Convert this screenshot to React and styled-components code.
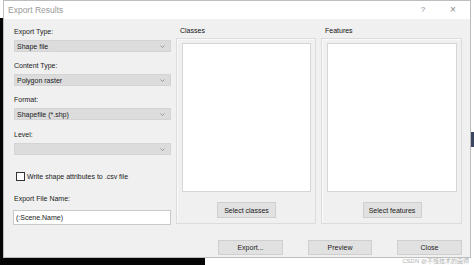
import React from 'react';
import styled, { createGlobalStyle } from 'styled-components';

const GlobalStyle = createGlobalStyle`
	html, body {
		margin: 0;
		padding: 0;
		background: #fff;
	}
	body {
		font-family: 'Liberation Sans', Arial, sans-serif;
		color: #1a1a1a;
	}
`;

const Page = styled.div`
	display: flex;
	width: 474px;
	height: 265px;
	overflow: hidden;
	background: #fff;
`;

const LeftEdge = styled.div`
	width: 3px;
	margin-top: 18px;
	background: #050505;
`;

const RightEdge = styled.div`
	width: 3px;
	padding-top: 132px;
	box-sizing: border-box;
`;

const EdgeMark = styled.div`
	height: 15px;
	background: #3b4660;
`;

const Stage = styled.div`
	width: 468px;
	display: flex;
	flex-direction: column;
`;

const Dialog = styled.div`
	height: 258px;
	box-sizing: border-box;
	border: 1px solid #bdbdbd;
	display: flex;
	flex-direction: column;
	background: #f0f0f0;
`;

const TitleBar = styled.div`
	height: 18px;
	background: #fff;
	display: flex;
	align-items: center;
	padding-left: 4px;
	padding-right: 2px;
`;

const Title = styled.div`
	flex: 1;
	font-size: 8.5px;
	color: #9a9a9a;
`;

const CaptionButton = styled.div`
	width: 30px;
	text-align: center;
	font-size: ${p => p.size || 8}px;
	color: #8a8a8a;
	line-height: 18px;
`;

const Body = styled.div`
	flex: 1;
	display: flex;
	flex-direction: column;
	padding: 8px 8px 0 9px;
`;

const Main = styled.div`
	display: grid;
	grid-template-columns: 158px 140px 141px;
	column-gap: 5px;
	align-items: start;
`;

const LeftColumn = styled.div`
	display: flex;
	flex-direction: column;
`;

const Label = styled.div`
	font-size: 7px;
	line-height: 10px;
	height: 10px;
	padding-left: 1px;
	margin-bottom: ${p => p.gap || 3}px;
	white-space: nowrap;
`;

const Field = styled.div`
	margin-bottom: ${p => p.spacing || 9}px;
`;

const Select = styled.div`
	height: 12px;
	margin-left: 1px;
	background: #dcdcdc;
	border: 1px solid #d4d4d4;
	box-sizing: border-box;
	display: flex;
	align-items: center;
	justify-content: space-between;
	padding: 0 5px 0 2px;
	font-size: 7px;
`;

const CheckRow = styled.label`
	display: flex;
	align-items: center;
	gap: 2px;
	height: 10px;
	margin-top: 7px;
	padding-left: 3px;
	font-size: 7px;
`;

const CheckBox = styled.span`
	width: 9px;
	height: 9px;
	box-sizing: border-box;
	border: 1px solid #333;
	background: #fff;
`;

const FileField = styled.div`
	margin-top: 13px;
`;

const TextInput = styled.div`
	height: 15px;
	box-sizing: border-box;
	background: #fff;
	border: 1px solid #c9c9c9;
	display: flex;
	align-items: center;
	padding-left: 2px;
	font-size: 7px;
`;

const GroupColumn = styled.div`
	display: flex;
	flex-direction: column;
`;

const GroupTitle = styled.div`
	font-size: 7px;
	line-height: 10px;
	height: 10px;
	padding-left: 4px;
	margin-top: -1px;
	margin-bottom: 2px;
	color: #111;
`;

const GroupBox = styled.div`
	height: 186px;
	box-sizing: border-box;
	border: 1px solid #dcdcdc;
	box-shadow: inset 1px 1px 0 #fafafa;
	padding: 4px 4px 0 5px;
	display: flex;
	flex-direction: column;
	align-items: center;
`;

const ListBox = styled.div`
	align-self: stretch;
	height: 149px;
	box-sizing: border-box;
	background: #fff;
	border: 1px solid #d6d6d6;
`;

const Button = styled.div`
	width: ${p => p.width || 65}px;
	height: ${p => p.height || 15}px;
	box-sizing: border-box;
	background: #e1e1e1;
	border: 1px solid #cfcfcf;
	display: flex;
	align-items: center;
	justify-content: center;
	font-size: 7px;
	margin-top: ${p => p.top || 0}px;
`;

const ButtonRow = styled.div`
	display: flex;
	justify-content: flex-end;
	gap: 25px;
	margin-top: 15px;
`;

const Footer = styled.div`
	height: 7px;
	display: flex;
	align-items: center;
`;

const FooterShadow = styled.div`
	width: 202px;
	height: 100%;
	background: #050505;
`;

const Watermark = styled.div`
	margin-left: auto;
	margin-right: 2px;
	font-family: 'Liberation Sans', 'Noto Sans CJK SC', sans-serif;
	font-size: 6px;
	line-height: 7px;
	color: #b0b0b0;
	white-space: nowrap;
`;

const Chevron = () => (
	<svg width="5" height="3" viewBox="0 0 5 3">
		<path d="M0.5 0.5 L2.5 2.5 L4.5 0.5" fill="none" stroke="#8a8a8a" strokeWidth="0.8" />
	</svg>
);

const SelectField = ({ label, value, spacing }) => (
	<Field spacing={spacing}>
		<Label>{label}</Label>
		<Select>
			<span>{value}</span>
			<Chevron />
		</Select>
	</Field>
);

const Group = ({ title, action, buttonWidth }) => (
	<GroupColumn>
		<GroupTitle>{title}</GroupTitle>
		<GroupBox>
			<ListBox />
			<Button width={buttonWidth} height={16} top={10}>
				{action}
			</Button>
		</GroupBox>
	</GroupColumn>
);

const App = () => (
	<>
		<GlobalStyle />
		<Page>
			<LeftEdge />
			<Stage>
				<Dialog>
					<TitleBar>
						<Title>Export Results</Title>
						<CaptionButton>?</CaptionButton>
						<CaptionButton size={10}>×</CaptionButton>
					</TitleBar>
					<Body>
						<Main>
							<LeftColumn>
								<SelectField label='Export Type:' value='Shape file' />
								<SelectField label='Content Type:' value='Polygon raster' />
								<SelectField label='Format:' value='Shapefile (*.shp)' spacing={10} />
								<SelectField label='Level:' value='' spacing={0} />
								<CheckRow>
									<CheckBox />
									Write shape attributes to .csv file
								</CheckRow>
								<FileField>
									<Label gap={6}>Export File Name:</Label>
									<TextInput>(:Scene.Name)</TextInput>
								</FileField>
							</LeftColumn>
							<Group title='Classes' action='Select classes' buttonWidth={59} />
							<Group title='Features' action='Select features' buttonWidth={59} />
						</Main>
						<ButtonRow>
							<Button>Export...</Button>
							<Button width={64}>Preview</Button>
							<Button>Close</Button>
						</ButtonRow>
					</Body>
				</Dialog>
				<Footer>
					<FooterShadow />
					<Watermark>CSDN @不懂技术的画师</Watermark>
				</Footer>
			</Stage>
			<RightEdge>
				<EdgeMark />
			</RightEdge>
		</Page>
	</>
);

export default App;
